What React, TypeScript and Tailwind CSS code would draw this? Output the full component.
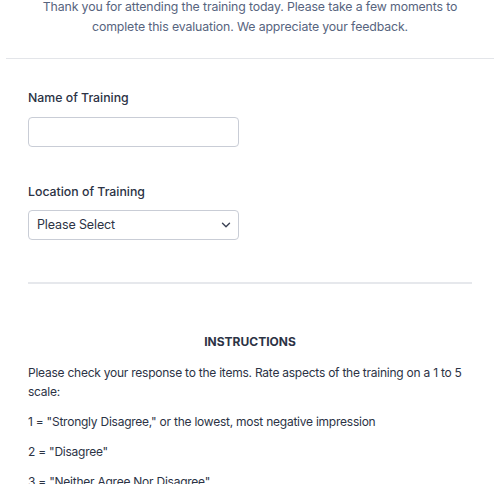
import { ChevronDown } from 'lucide-react';

const scale = [
    '1 = "Strongly Disagree," or the lowest, most negative impression',
    '2 = "Disagree"',
    '3 = "Neither Agree Nor Disagree"',
    '4 = "Agree"',
    '5 = "Strongly Agree," or the highest, most positive impression',
];

export default function App() {
    return (
        <div
            className="w-[500px] h-[484px] overflow-hidden bg-white"
            style={{ fontFamily: 'Inter, "Noto Sans", sans-serif' }}
        >
            {/* Header */}
            <div className="px-[28px] -mt-[3px] pb-[21px]">
                <p className="text-center text-[12.3px] leading-[20px] tracking-[-0.01em] text-[#57647e]">
                    Thank you for attending the training today. Please take a few moments to complete this evaluation. We appreciate your feedback.
                </p>
            </div>
            <div className="mx-[6px] h-px bg-[#e3e5e9]" />

            {/* Form body */}
            <div className="px-[28px] pt-[29px]">
                <div>
                    <label className="block text-[12.3px] leading-[20px] font-medium text-[#2c3345]">
                        Name of Training
                    </label>
                    <input
                        type="text"
                        className="mt-[9px] w-[211px] h-[30px] rounded-[4px] border border-[#c9cdd6] bg-white px-[8px] text-[12px] outline-none"
                    />
                </div>

                <div className="mt-[35px]">
                    <label className="block text-[12.3px] leading-[20px] font-medium text-[#2c3345]">
                        Location of Training
                    </label>
                    <div className="mt-[8px] w-[211px] h-[30px] rounded-[4px] border border-[#c9cdd6] bg-white flex items-center justify-between pl-[8px] pr-[5px]">
                        <span className="text-[12.5px] tracking-[-0.01em] text-[#2c3345]">Please Select</span>
                        <ChevronDown className="w-[14px] h-[14px] text-[#3b4254]" strokeWidth={2.4} />
                    </div>
                </div>

                <div className="mt-[42px] h-[2px] bg-[#e6e8ec]" />

                {/* Instructions */}
                <div className="pt-[49px]">
                    <h3 className="text-center text-[12px] leading-[18px] font-bold text-[#2c3345]">
                        INSTRUCTIONS
                    </h3>
                    <p className="mt-[12px] text-[12px] leading-[19px] tracking-[-0.02em] text-[#2c3345]">
                        Please check your response to the items. Rate aspects of the training on a 1 to 5 scale:
                    </p>
                    {scale.map((line) => (
                        <p key={line} className="mt-[11px] text-[12px] leading-[19px] tracking-[-0.02em] text-[#2c3345]">
                            {line}
                        </p>
                    ))}
                </div>
            </div>
        </div>
    );
}
